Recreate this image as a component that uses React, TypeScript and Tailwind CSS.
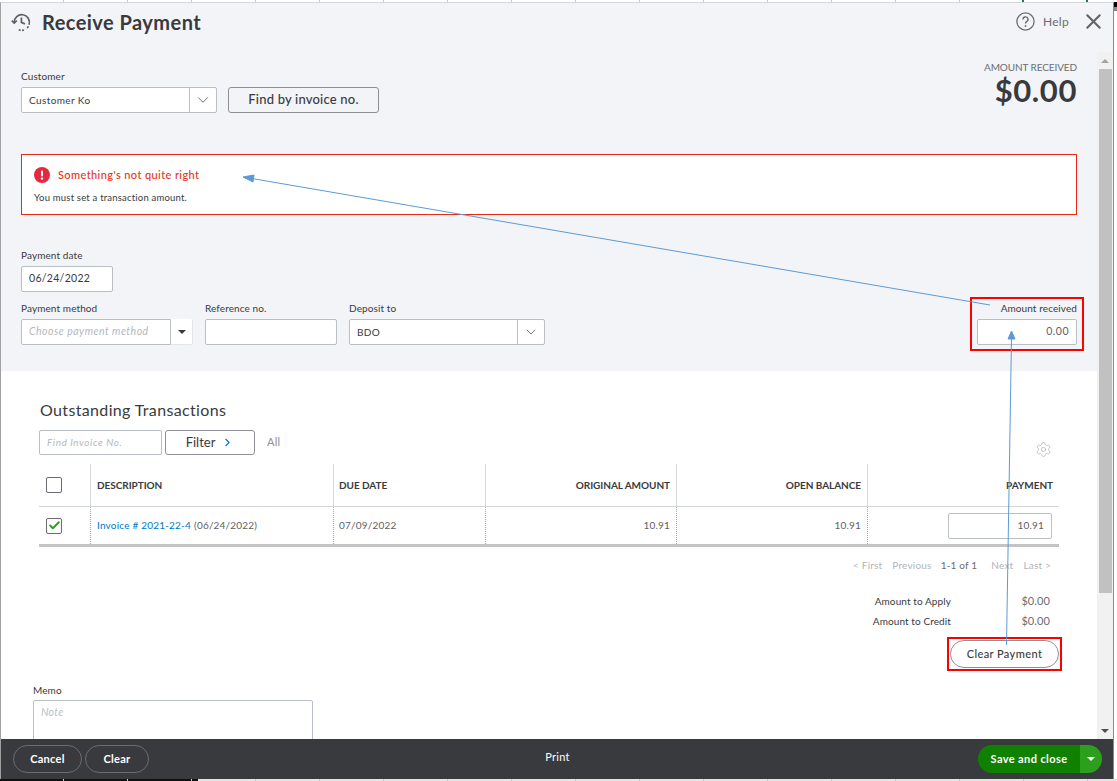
// App.tsx
import { ChevronDown, ChevronRight, Settings, X, Check } from "lucide-react";

const font = "font-['Lato','Noto_Sans',sans-serif]";
const cells = Array.from({ length: 18 }, (_, i) => i);

const Label = ({ text, className = "" }: { text: string; className?: string }) => (
  <div className={`h-[12px] text-[10px] leading-[12px] tracking-[0.1px] text-[#393a3d] ${className}`}>{text}</div>
);

// the spreadsheet window peeking out above and below the dialog
const StripTicks = ({ className = "", green = false }: { className?: string; green?: boolean }) => (
  <div className={`flex h-[2px] shrink-0 ${className}`}>
    {cells.map((i) => (
      <div
        key={i}
        className={
          green && i >= 15
            ? "h-full w-[64px] shrink-0 border-r-[2px] border-[#1d7a45]"
            : "h-full w-[64px] shrink-0 border-r border-[#c9c9c9]"
        }
      />
    ))}
  </div>
);

const SelectBox = ({ value, width, chevron = 18 }: { value: string; width: string; chevron?: number }) => (
  <div className={`flex h-[26px] ${width} items-stretch rounded-[2px] border border-[#babec5] bg-white`}>
    <div className="flex flex-1 items-center pl-[7px] text-[10px] tracking-[0.4px] text-[#393a3d]">{value}</div>
    <div className="flex w-[27px] items-center justify-center border-l border-[#babec5]">
      <ChevronDown size={chevron} strokeWidth={1.3} color="#6b6c72" />
    </div>
  </div>
);

const HistoryIcon = () => (
  <svg width="21" height="21" viewBox="0 0 21 21" fill="none" stroke="#5f6066" strokeWidth="1.7">
    <path d="M3.2 10.5a7.6 7.6 0 1 1 14.8 2.2" />
    <path d="M17.4 14.4a7.6 7.6 0 0 1-2.4 2.6" strokeDasharray="2 1.4" />
    <path d="M13 18a7.6 7.6 0 0 1-5.8-.4" strokeDasharray="2 1.4" />
    <path d="M0.8 8.6 3.2 11l2.6-2.4" />
    <path d="M10.4 5.6v4.8l3.6 1.6" />
  </svg>
);

const ErrorIcon = () => (
  <svg width="16" height="16" viewBox="0 0 16 16">
    <circle cx="8" cy="8" r="8" fill="#e2293f" />
    <rect x="7" y="3.4" width="2" height="6" rx="1" fill="#fff" />
    <circle cx="8" cy="11.6" r="1.2" fill="#fff" />
  </svg>
);

const HelpIcon = () => (
  <svg width="19" height="19" viewBox="0 0 19 19" fill="none">
    <circle cx="9.5" cy="9.5" r="8.6" stroke="#6b6c72" strokeWidth="1.3" />
    <path d="M7 7.4a2.5 2.5 0 1 1 3.7 2.2c-.8.5-1.2.9-1.2 1.8" stroke="#6b6c72" strokeWidth="1.4" />
    <circle cx="9.5" cy="14" r="0.9" fill="#6b6c72" />
  </svg>
);

const Annotations = () => (
  <svg className="pointer-events-none absolute left-0 top-0" width="1117" height="781" fill="none">
    <path d="M990 305 250 178.2" stroke="#5b9bd5" strokeWidth="1" />
    <path d="M243 177 254 175 253 182Z" fill="#5b9bd5" stroke="#5b9bd5" />
    <path d="M1006.500 645 1011.500 337" stroke="#5b9bd5" strokeWidth="1" />
    <path d="M1011.500 331 1008 339 1015 339Z" fill="#5b9bd5" stroke="#5b9bd5" />
  </svg>
);

export default function App() {
  const columns = "grid grid-cols-[51px_243px_152px_191px_191px_192px]";
  return (
    <div className={`relative flex h-[781px] w-[1117px] flex-col overflow-hidden bg-white ${font}`}>
      <StripTicks green className="bg-white" />
      <div className="flex h-[777px] shrink-0">
        <div className="flex h-full w-[1114px] shrink-0 flex-col border-l border-r border-t border-l-[#a0a0a0] border-r-[#8a8a8a] border-t-[#d4d7dc]">
          {/* title bar */}
          <div className="flex h-[49px] shrink-0 items-start justify-between bg-[#f3f4f8] pl-[10px] pr-[7px] pt-[6px]">
            <div className="mt-[2px] flex items-center gap-[10px]">
              <HistoryIcon />
              <span className="text-[20px] font-bold leading-[22px] tracking-[0.45px] text-[#393a3d]">Receive Payment</span>
            </div>
            <div className="flex items-center">
              <HelpIcon />
              <span className="ml-[8px] text-[12px] tracking-[0.3px] text-[#6b6c72]">Help</span>
              <X className="ml-[12px]" size={25} strokeWidth={2} color="#62636a" />
            </div>
          </div>

          <div className="flex min-h-0 flex-1">
            <div className="min-w-0 flex-1 overflow-hidden">
              {/* top form */}
              <div className="h-[319px] bg-[#f3f4f8] pl-[20px] pr-[20px] pt-[9px]">
                <div className="flex justify-between">
                  <div className="pt-[9px]">
                    <Label text="Customer" />
                    <div className="mt-[5px] flex gap-[11px]">
                      <SelectBox value="Customer Ko" width="w-[196px]" />
                      <button className="h-[26px] w-[151px] rounded-[3px] border border-[#8d9096] bg-[#f3f4f8] text-[13px] font-medium tracking-[0.2px] text-[#393a3d]">
                        Find by invoice no.
                      </button>
                    </div>
                  </div>
                  <div className="flex flex-col items-end">
                    <div className="text-[10px] leading-[12px] tracking-[-0.1px] text-[#6b6c72]">AMOUNT RECEIVED</div>
                    <div className="text-[31px] font-bold leading-[34px] tracking-[0.6px] text-[#393a3d]">$0.00</div>
                  </div>
                </div>

                <div className="mt-[41px] h-[61px] border border-t-[#e42b15] border-r-[#e42b15] border-b-[#e42b15] border-l-[#e42b15] bg-white pl-[12px] pt-[12px]">
                  <div className="flex items-center gap-[8px]">
                    <ErrorIcon />
                    <span className="text-[11px] font-medium tracking-[0.4px] text-[#e4341c]">Something's not quite right</span>
                  </div>
                  <div className="mt-[8px] text-[9.5px] leading-[12px] tracking-[0.2px] text-[#393a3d]">You must set a transaction amount.</div>
                </div>

                <Label text="Payment date" className="mt-[34px]" />
                <div className="mt-[5px] flex h-[26px] w-[92px] items-center rounded-[2px] border border-[#babec5] bg-white pl-[7px] text-[10.5px] tracking-[0.3px] text-[#393a3d]">
                  06/24/2022
                </div>

                <div className="mt-[10px] flex items-start justify-between">
                  <div className="flex gap-[12px]">
                    <div>
                      <Label text="Payment method" />
                      <div className="mt-[5px] flex h-[26px] w-[172px]">
                        <div className="flex w-[150px] items-center rounded-l-[2px] border border-[#babec5] bg-white pl-[7px] text-[10.5px] italic tracking-[0.5px] text-[#b4b7bd]">
                          Choose payment method
                        </div>
                        <div className="flex flex-1 items-center justify-center rounded-r-[2px] border-b border-r border-b-[#e3e5e9] border-r-[#e3e5e9] bg-white">
                          <div className="h-0 w-0 border-x-[4px] border-t-[4px] border-x-transparent border-t-[#393a3d]" />
                        </div>
                      </div>
                    </div>
                    <div>
                      <Label text="Reference no." />
                      <div className="mt-[5px] h-[26px] w-[132px] rounded-[2px] border border-[#babec5] bg-white" />
                    </div>
                    <div>
                      <Label text="Deposit to" />
                      <div className="mt-[5px]">
                        <SelectBox value="BDO" width="w-[196px]" chevron={16} />
                      </div>
                    </div>
                  </div>
                  <div className="flex flex-col items-end">
                    <Label text="Amount received" />
                    <div className="mt-[5px] flex h-[26px] w-[100px] items-center justify-end rounded-[2px] border border-[#babec5] bg-white pr-[7px] text-[10.5px] tracking-[0.5px] text-[#5f6066]">
                      0.00
                    </div>
                  </div>
                </div>
              </div>

              {/* outstanding transactions */}
              <div className="relative bg-white pl-[38px] pr-[37px] pt-[29px]">
                <div className="ml-[1px] h-[20px] text-[16px] leading-[20px] tracking-[0.35px] text-[#393a3d]">Outstanding Transactions</div>
                <div className="mt-[10px] flex items-center">
                  <div className="flex h-[25px] w-[123px] items-center rounded-[2px] border border-[#babec5] pl-[7px] text-[10px] italic tracking-[0.55px] text-[#b4b7bd]">
                    Find Invoice No.
                  </div>
                  <button className="ml-[3px] flex h-[25px] w-[90px] items-center justify-center gap-[6px] rounded-[3px] border border-[#8d9096] text-[13px] text-[#393a3d]">
                    Filter
                    <ChevronRight size={13} strokeWidth={2} color="#0077c5" />
                  </button>
                  <span className="ml-[12px] text-[11px] tracking-[0.3px] text-[#8d9096]">All</span>
                </div>
                <div className="absolute right-[45px] top-[70px]">
                  <Settings size={17} strokeWidth={1.3} color="#babec5" />
                </div>

                {/* table */}
                <div className="mt-[9px] w-[1020px]">
                  <div className={`${columns} h-[43px] border-b border-[#d4d7dc] text-[10px] font-bold tracking-[-0.05px] text-[#393a3d]`}>
                    <div className="flex items-center pl-[7px]">
                      <div className="h-[16px] w-[16px] rounded-[2px] border border-[#6b6c72]" />
                    </div>
                    <div className="flex items-center border-l border-[#d4d7dc] pl-[6px]">DESCRIPTION</div>
                    <div className="flex items-center border-l border-[#d4d7dc] pl-[5px]">DUE DATE</div>
                    <div className="flex items-center justify-end border-l border-[#d4d7dc] pr-[6px]">ORIGINAL AMOUNT</div>
                    <div className="flex items-center justify-end border-l border-[#d4d7dc] pr-[6px]">OPEN BALANCE</div>
                    <div className="flex items-center justify-end border-l border-[#d4d7dc] pr-[6px]">PAYMENT</div>
                  </div>
                  <div className={`${columns} h-[40px] border-b-[3px] border-[#c4c4c4] text-[10px] tracking-[0.2px] text-[#5f6066]`}>
                    <div className="flex items-center pl-[7px]">
                      <div className="flex h-[16px] w-[16px] items-center justify-center rounded-[2px] border border-[#6b6c72]">
                        <Check size={13} strokeWidth={3.5} color="#2ca01c" />
                      </div>
                    </div>
                    <div className="flex items-center border-l border-dotted border-[#a8a8a8] pl-[6px]">
                      <span className="text-[#0077c5]">Invoice # 2021-22-4</span>
                      <span className="ml-[3px]">(06/24/2022)</span>
                    </div>
                    <div className="flex items-center border-l border-dotted border-[#a8a8a8] pl-[5px]">07/09/2022</div>
                    <div className="flex items-center justify-end border-l border-dotted border-[#a8a8a8] pr-[6px]">10.91</div>
                    <div className="flex items-center justify-end border-l border-dotted border-[#a8a8a8] pr-[6px]">10.91</div>
                    <div className="flex items-center justify-end border-l border-dotted border-[#a8a8a8] pr-[7px]">
                      <div className="flex h-[26px] w-[104px] items-center justify-end rounded-[2px] border border-[#babec5] pr-[7px]">10.91</div>
                    </div>
                  </div>
                </div>

                {/* pager */}
                <div className="mt-[11px] flex h-[14px] w-[1012px] items-center justify-end text-[10px] tracking-[0.2px] text-[#b0b3ba]">
                  <span>&lt; First</span>
                  <span className="ml-[10px]">Previous</span>
                  <span className="ml-[9px] text-[#6b6c72]">1-1 of 1</span>
                  <span className="ml-[14px]">Next</span>
                  <span className="ml-[10px]">Last &gt;</span>
                </div>

                {/* totals */}
                <div className="mt-[19px] w-[1011px] text-[10px] tracking-[0.1px] text-[#393a3d]">
                  <div className="flex h-[20px] items-center justify-end">
                    <span>Amount to Apply</span>
                    <span className="w-[99px] text-right text-[11px] text-[#6b6c72]">$0.00</span>
                  </div>
                  <div className="flex h-[20px] items-center justify-end">
                    <span>Amount to Credit</span>
                    <span className="w-[99px] text-right text-[11px] text-[#6b6c72]">$0.00</span>
                  </div>
                </div>
                <div className="mt-[9px] flex w-[1020px] justify-end">
                  <button className="h-[28px] w-[109px] rounded-full border border-[#8d9096] bg-white text-[11px] font-medium tracking-[0.4px] text-[#393a3d]">
                    Clear Payment
                  </button>
                </div>

                {/* memo */}
                <div className="-ml-[6px] mt-[16px]">
                  <Label text="Memo" />
                  <div className="mt-[4px] h-[60px] w-[280px] rounded-[2px] border border-[#babec5] pl-[7px] pt-[4px] text-[10.5px] italic tracking-[0.3px] text-[#babec5]">
                    Note
                  </div>
                </div>
              </div>
            </div>

            {/* scrollbar */}
            <div className="flex w-[16px] shrink-0 flex-col items-center bg-[#f1f1f1]">
              <div className="flex h-[17px] items-center">
                <div className="h-0 w-0 border-x-[4px] border-b-[4px] border-x-transparent border-b-[#a3a3a3]" />
              </div>
              <div className="h-[524px] w-[13px] bg-[#c1c1c1]" />
              <div className="flex-1" />
              <div className="flex h-[17px] items-center">
                <div className="h-0 w-0 border-x-[4px] border-t-[4px] border-x-transparent border-t-[#505050]" />
              </div>
            </div>
          </div>

          {/* footer */}
          <div className="grid h-[40px] shrink-0 grid-cols-3 items-center bg-[#393a3d] pl-[12px] pr-[11px] text-[11px] font-bold tracking-[0.3px] text-white">
            <div className="flex gap-[3px]">
              <button className="h-[28px] w-[69px] rounded-full border border-[#6b6c72] font-bold">Cancel</button>
              <button className="h-[28px] w-[64px] rounded-full border border-[#6b6c72] font-bold">Clear</button>
            </div>
            <div className="pb-[4px] text-center font-normal">Print</div>
            <div className="flex justify-end">
              <div className="flex h-[28px] w-[124px] overflow-hidden rounded-full">
                <button className="flex-1 bg-[#108000] font-bold tracking-[0.4px]">Save and close</button>
                <div className="flex w-[22px] items-center justify-center bg-[#2ca01c]">
                  <div className="h-0 w-0 border-x-[4px] border-t-[4px] border-x-transparent border-t-white" />
                </div>
              </div>
            </div>
          </div>
        </div>
        {/* sliver of the window behind */}
        <div className="flex-1">
          <div className="h-[5px] bg-black" />
          <div className="h-[4px] bg-[#8a8a8a]" />
        </div>
      </div>
      <StripTicks className="bg-[linear-gradient(to_right,#111_198px,#e4e4e4_198px)]" />

      {/* red callout boxes and arrows drawn over the screenshot */}
      <div className="pointer-events-none absolute left-[970px] top-[297px] h-[54px] w-[114px] border-[2px] border-[#ff0000]" />
      <div className="pointer-events-none absolute left-[947px] top-[637px] h-[34px] w-[115px] border-[2px] border-[#ff0000]" />
      <Annotations />
    </div>
  );
}
